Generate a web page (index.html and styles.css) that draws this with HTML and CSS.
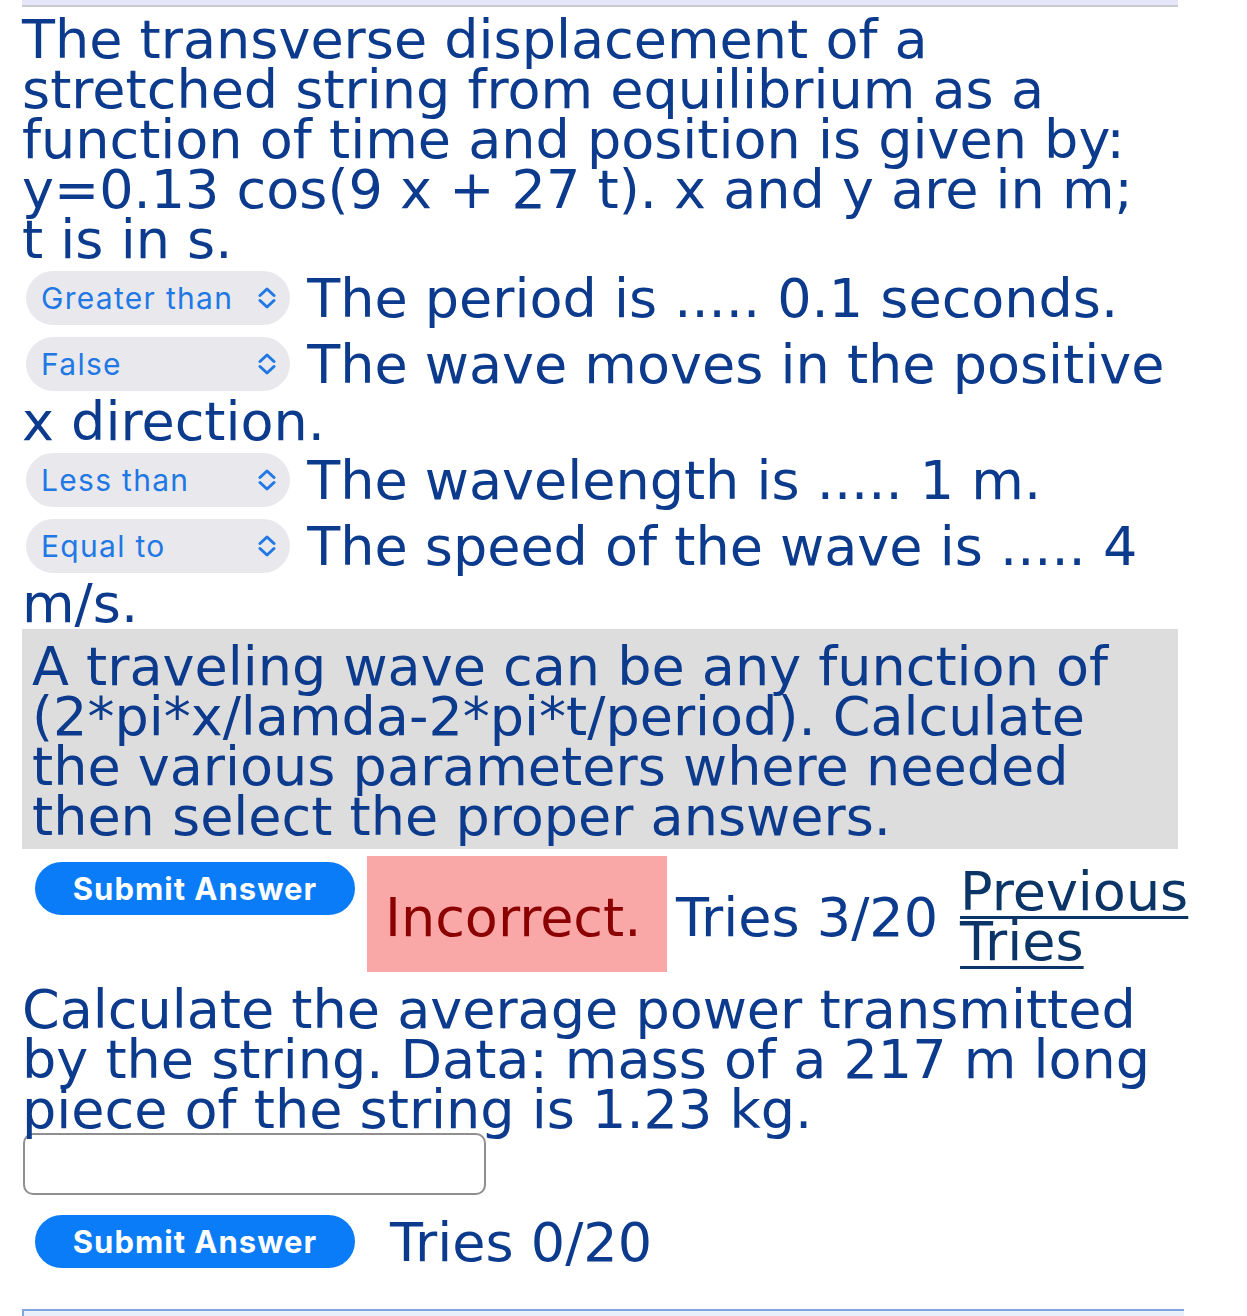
FILE: index.html
```html
<!DOCTYPE html>
<html>
<head>
<meta charset="utf-8">
<link rel="stylesheet" href="styles.css">
</head>
<body>
<div class="page">
  <div class="topstrip"></div>
  <div class="problem">
    <div class="flow">The transverse displacement of a stretched string from equilibrium as a function of time and position is given by: y=0.13 cos(9 x + 27 t). x and y are in m; t is in s.<br><span class="sel"><span class="sel-text">Greater than</span><svg class="chev" viewBox="0 0 18 22" width="18" height="22"><path d="M2 8.5 L9 2 L16 8.5 M2 13.5 L9 20 L16 13.5"/></svg></span> The period is ..... 0.1 seconds.<br><span class="sel"><span class="sel-text">False</span><svg class="chev" viewBox="0 0 18 22" width="18" height="22"><path d="M2 8.5 L9 2 L16 8.5 M2 13.5 L9 20 L16 13.5"/></svg></span> The wave moves in the positive x direction.<br><span class="sel"><span class="sel-text">Less than</span><svg class="chev" viewBox="0 0 18 22" width="18" height="22"><path d="M2 8.5 L9 2 L16 8.5 M2 13.5 L9 20 L16 13.5"/></svg></span> The wavelength is ..... 1 m.<br><span class="sel"><span class="sel-text">Equal to</span><svg class="chev" viewBox="0 0 18 22" width="18" height="22"><path d="M2 8.5 L9 2 L16 8.5 M2 13.5 L9 20 L16 13.5"/></svg></span> The speed of the wave is ..... 4 m/s.</div>
    <div class="hint">A traveling wave can be any function of (2*pi*x/lamda-2*pi*t/period). Calculate the various parameters where needed then select the proper answers.</div>
    <div class="answer-row">
      <button class="submit submit-top" type="button">Submit Answer</button>
      <div class="incorrect">Incorrect.</div>
      <div class="tries">Tries 3/20</div>
      <a class="prev" href="#">Previous Tries</a>
    </div>
    <div class="flow part2">Calculate the average power transmitted by the string. Data: mass of a 217 m long piece of the string is 1.23 kg.</div>
    <input class="answer-input" type="text">
    <div class="answer-row2">
      <button class="submit" type="button">Submit Answer</button>
      <div class="tries tries2">Tries 0/20</div>
    </div>
  </div>
  <div class="bottombar"></div>
</div>
</body>
</html>
```
FILE: styles.css
```css
html, body {
  margin: 0;
  padding: 0;
  background: #ffffff;
}
.page {
  margin-left: 22px;
  width: 1156px;
  font-family: "DejaVu Sans", Verdana, sans-serif;
  font-size: 54px;
  line-height: 50px;
  color: #0c3a8d;
}
.topstrip {
  height: 5px;
  background: #e6e6fa;
  border-bottom: 2px solid #c9c9d2;
}
.flow {
  width: 1145px;
  padding-top: 8px;
}
.sel {
  display: inline-flex;
  align-items: center;
  justify-content: space-between;
  box-sizing: border-box;
  width: 264px;
  height: 54px;
  margin: 6px 0 6px 4px;
  padding: 0 14px 0 15px;
  background: #e9e9ed;
  border-radius: 27px;
  vertical-align: 8px;
  font-family: Inter, "Noto Sans", sans-serif;
  font-size: 30px;
  letter-spacing: 1.3px;
  line-height: 54px;
  color: #2178e4;
}
.sel-text {
  line-height: 36px;
}
.chev {
  flex: none;
}
.chev path {
  fill: none;
  stroke: #2178e4;
  stroke-width: 3;
  stroke-linecap: round;
  stroke-linejoin: round;
}
.hint {
  background: #dddddd;
  padding: 13px 10px 7px 10px;
}
.answer-row {
  display: flex;
  align-items: center;
  margin-top: 7px;
  height: 116px;
  white-space: nowrap;
}
.submit {
  flex: none;
  width: 320px;
  height: 53px;
  margin-left: 13px;
  padding: 0;
  border: none;
  border-radius: 27px;
  background: #0a7cf7;
  color: #ffffff;
  font-family: Inter, "Noto Sans", sans-serif;
  font-weight: 700;
  font-size: 31px;
  letter-spacing: 1px;
}
.submit-top {
  align-self: flex-start;
  margin-top: 6px;
}
.incorrect {
  flex: none;
  box-sizing: border-box;
  width: 300px;
  height: 116px;
  margin-left: 12px;
  padding-left: 18px;
  display: flex;
  align-items: center;
  background: #faa7a7;
  color: #8b0000;
  padding-top: 8px;
}
.tries {
  margin-left: 9px;
  padding-top: 8px;
}
.prev {
  margin-left: 22px;
  width: min-content;
  white-space: normal;
  color: #0a3566;
  text-decoration: underline;
  text-decoration-thickness: 3px;
  text-underline-offset: 6px;
  padding-top: 6px;
}
.part2 {
  padding-top: 13px;
}
.answer-input {
  display: block;
  box-sizing: border-box;
  width: 463px;
  height: 62px;
  margin: -2px 0 0 1px;
  border: 2px solid #8f8f8f;
  border-radius: 10px;
  background: #ffffff;
  font-size: 30px;
}
.answer-row2 {
  display: flex;
  align-items: center;
  margin-top: 19px;
}
.tries2 {
  margin-left: 35px;
  padding-top: 4px;
}
.bottombar {
  margin-top: 41px;
  width: 1160px;
  height: 20px;
  border-top: 2px solid #7ea7e0;
  border-left: 2px solid #7ea7e0;
  background: #e8f0fb;
}
```
